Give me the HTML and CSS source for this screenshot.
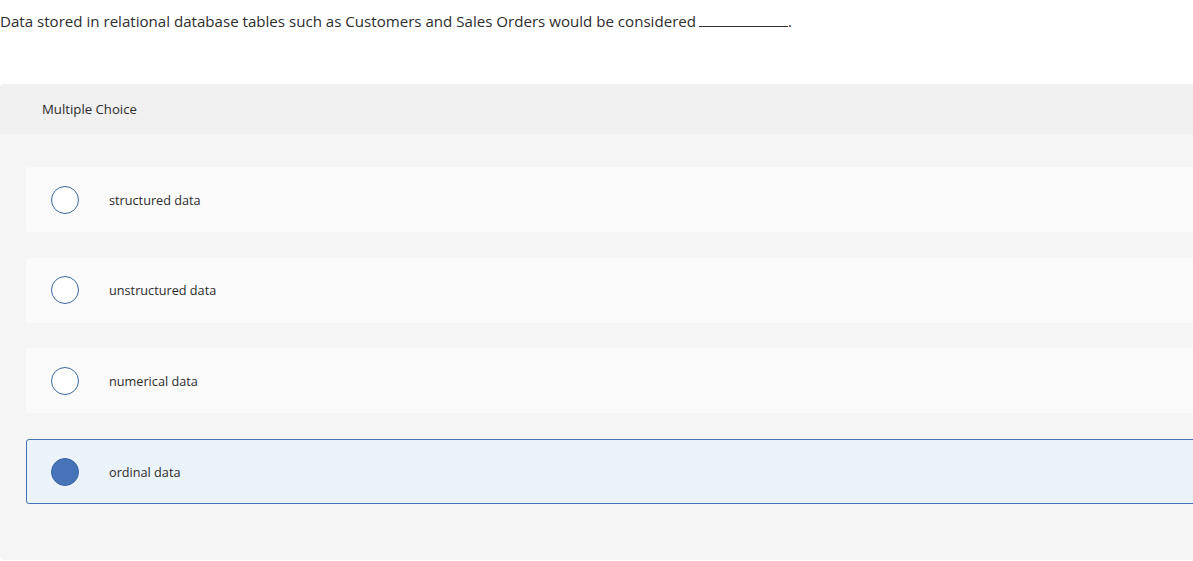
FILE: index.html
```html
<!DOCTYPE html>
<html>
<head>
<meta charset="utf-8">
<link rel="stylesheet" href="styles.css">
</head>
<body>
<div class="page">
  <p class="question">Data stored in relational database tables such as Customers and Sales Orders would be considered <span class="blank"></span>.</p>
  <section class="panel">
    <div class="panel-head">Multiple Choice</div>
    <div class="choices">
      <div class="choice"><span class="radio"></span><span class="label">structured data</span></div>
      <div class="choice"><span class="radio"></span><span class="label">unstructured data</span></div>
      <div class="choice"><span class="radio"></span><span class="label">numerical data</span></div>
      <div class="choice selected"><span class="radio"></span><span class="label">ordinal data</span></div>
    </div>
  </section>
</div>
</body>
</html>
```
FILE: styles.css
```css
html, body {
  margin: 0;
  padding: 0;
  background: #ffffff;
  overflow: hidden;
}
body {
  font-family: "Open Sans", "Lato", sans-serif;
  color: #333333;
}
.page {
  width: 1230px;
}
.question {
  margin: 0;
  padding-top: 11px;
  height: 84px;
  box-sizing: border-box;
  font-size: 15.1px;
  line-height: 20px;
  color: #2d2d2d;
}
.blank {
  display: inline-block;
  width: 89px;
  border-bottom: 1px solid #333333;
  vertical-align: baseline;
  margin-left: -1px;
}
.panel {
  background: #f5f5f5;
  border-radius: 4px;
  height: 476px;
}
.panel-head {
  background: #f0f0f0;
  height: 50px;
  border-radius: 4px 4px 0 0;
  display: flex;
  align-items: center;
  padding-left: 42px;
  font-size: 13.2px;
  color: #2d2d2d;
}
.choices {
  display: flex;
  flex-direction: column;
  gap: 25.7px;
  padding: 33px 0 0 26px;
}
.choice {
  height: 65px;
  box-sizing: border-box;
  background: #fafafa;
  border-radius: 3px;
  display: flex;
  align-items: center;
  padding-left: 25px;
}
.choice.selected {
  background: #eaf2fa;
  border: 1px solid #4472b4;
  padding-left: 24px;
}
.radio {
  width: 28px;
  height: 28px;
  box-sizing: border-box;
  border-radius: 50%;
  border: 1.5px solid #3e679f;
  background: #ffffff;
  flex: none;
}
.selected .radio {
  background: #4774b8;
  border-color: #3a64a4;
}
.label {
  margin-left: 30px;
  font-size: 12.7px;
  color: #2d2d2d;
}
```
